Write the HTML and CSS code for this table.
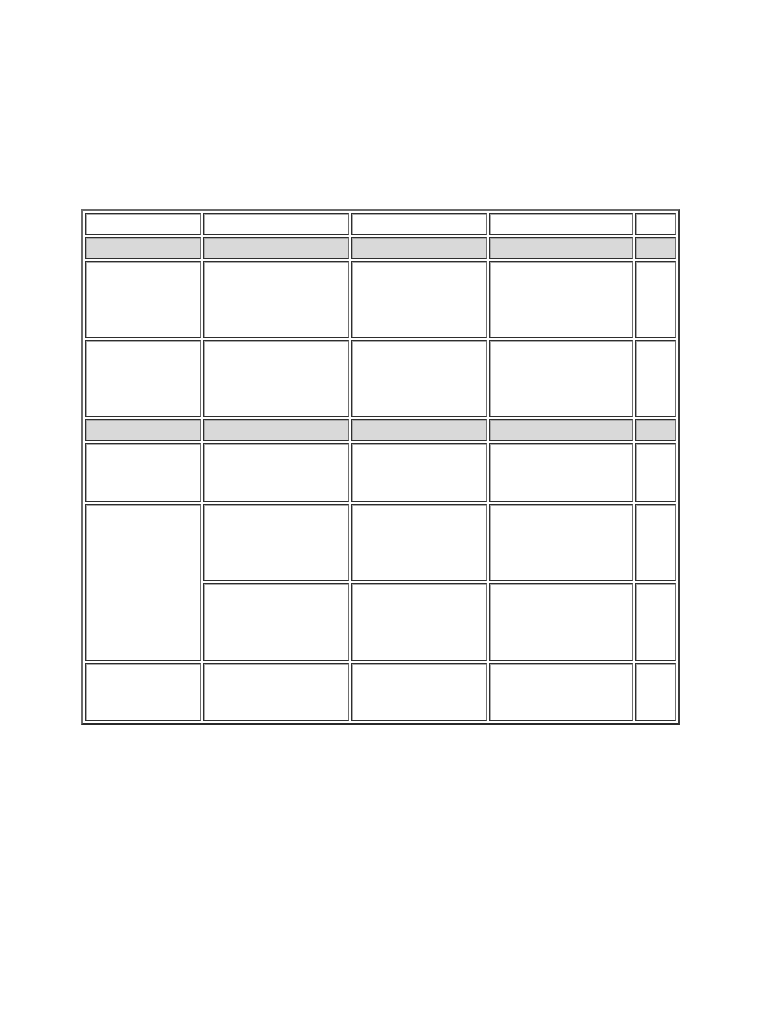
FILE: index.html
```html
<!DOCTYPE html>
<html>
<head>
<meta charset="utf-8">
<link rel="stylesheet" href="styles.css">
</head>
<body>
<table class="grid">
  <colgroup>
    <col class="c1"><col class="c2"><col class="c3"><col class="c4"><col class="c5">
  </colgroup>
  <tr class="h22"><td></td><td></td><td></td><td></td><td></td></tr>
  <tr class="h22 shade"><td></td><td></td><td></td><td></td><td></td></tr>
  <tr class="h77"><td></td><td></td><td></td><td></td><td></td></tr>
  <tr class="h77"><td></td><td></td><td></td><td></td><td></td></tr>
  <tr class="h22 shade"><td></td><td></td><td></td><td></td><td></td></tr>
  <tr class="h59"><td></td><td></td><td></td><td></td><td></td></tr>
  <tr class="h77"><td rowspan="2"></td><td></td><td></td><td></td><td></td></tr>
  <tr class="h78"><td></td><td></td><td></td><td></td></tr>
  <tr class="h58"><td></td><td></td><td></td><td></td><td></td></tr>
</table>
</body>
</html>
```
FILE: styles.css
```css
html, body {
  margin: 0;
  padding: 0;
  background: #ffffff;
  font-family: "Liberation Serif", serif;
}
.grid {
  margin: 209px 0 0 81px;
  table-layout: fixed;
  border-collapse: separate;
  border-spacing: 2px;
  border-style: solid;
  border-width: 2px;
  border-color: #6a6a6a #3a3a3a #2a2a2a #6a6a6a;
  width: 599px;
}
.grid td {
  box-sizing: border-box;
  border: 1px solid;
  border-color: #2e2e2e #6e6e6e #2e2e2e #2e2e2e;
  box-shadow: inset 1px 1px 0 #a8a8a8;
  padding: 0;
}
.c1 { width: 116px; }
.c2 { width: 146px; }
.c3 { width: 136px; }
.c4 { width: 144px; }
.c5 { width: 41px; }
.h22 td { height: 22px; }
.h58 td { height: 58px; }
.h59 td { height: 59px; }
.h77 td { height: 77px; }
.h78 td { height: 78px; }
.shade td { background: #d9d9d9; }
```
